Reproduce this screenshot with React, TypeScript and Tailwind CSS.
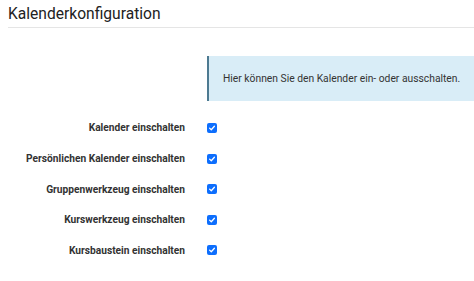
import React from "react";

const rows = [
  "Kalender einschalten",
  "Persönlichen Kalender einschalten",
  "Gruppenwerkzeug einschalten",
  "Kurswerkzeug einschalten",
  "Kursbaustein einschalten",
];

function Check() {
  return (
    <span className="flex h-[10px] w-[10px] items-center justify-center rounded-[2px] bg-[#0d6efd]">
      <svg viewBox="0 0 10 10" className="h-[8px] w-[8px]">
        <path d="M2 5.2 L4.1 7.2 L8 2.8" fill="none" stroke="#fff" strokeWidth="1.6" strokeLinecap="round" strokeLinejoin="round" />
      </svg>
    </span>
  );
}

export default function App() {
  return (
    <div className="h-[281px] w-[474px] overflow-hidden bg-white pl-[8px] text-[#333]" style={{ fontFamily: "Roboto, 'Liberation Sans', sans-serif" }}>
      <h1 className="border-b border-[#e5e5e5] pt-[5px] pb-[3px] text-[15.6px] leading-[19px] font-normal text-[#222]">
        Kalenderkonfiguration
      </h1>
      <div className="mt-[28px] grid grid-cols-[177px_1fr] gap-x-[22px]">
        <div />
        <div className="flex h-[45px] items-center border-l-[2px] border-[#4d7a91] bg-[#d9edf7] pl-[14px] text-[10.3px] text-[#333]">
          Hier können Sie den Kalender ein- oder ausschalten.
        </div>
      </div>
      <div className="mt-[22px] grid grid-cols-[177px_1fr] gap-x-[22px] gap-y-[20.6px]">
        {rows.map((r) => (
          <React.Fragment key={r}>
            <div className="flex h-[10px] items-center justify-end text-[10.2px] font-bold text-[#333] whitespace-nowrap">{r}</div>
            <div className="flex h-[10px] items-center">
              <Check />
            </div>
          </React.Fragment>
        ))}
      </div>
    </div>
  );
}
